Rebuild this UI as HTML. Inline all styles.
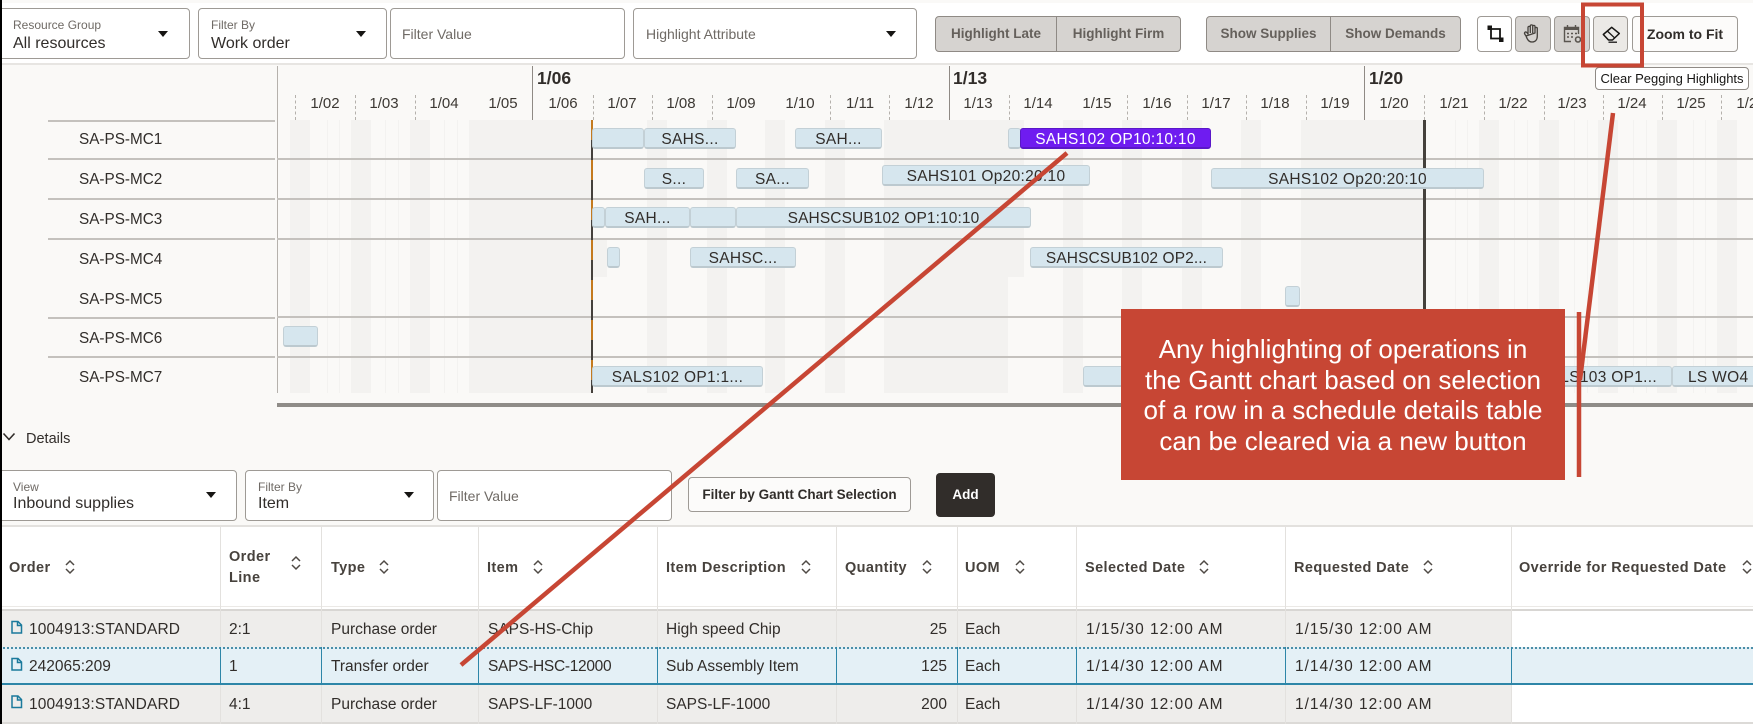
<!DOCTYPE html>
<html lang="en"><head><meta charset="utf-8"><title>Gantt chart</title>
<style>
html,body{margin:0;padding:0}
body{width:1753px;height:724px;position:relative;overflow:hidden;background:#faf9f7;font-family:"Liberation Sans",sans-serif;color:#312d2a}
div,span{position:absolute;box-sizing:border-box;white-space:nowrap}
.in{background:#fff;border:1px solid #9e9a95;border-radius:4px}
.sl{font-size:12px;color:#6f6a65;line-height:14px}
.v{font-size:16px;line-height:18px;color:#312d2a}
.ph{font-size:14px;color:#6f6a65;line-height:16px}
.ar{width:0;height:0;border-left:5px solid transparent;border-right:5px solid transparent;border-top:6px solid #161513}
.g{background:#d6d3d0;border:1px solid #8f8a85;font:bold 13.5px/34px "Liberation Sans",sans-serif;color:#65605b;text-align:center}
.ib{border:1px solid #9e9a95;border-radius:4px;height:36px;top:16px}
.s{top:120px;height:273px;background:#f3f2f0}
.t{top:120px;height:273px;width:1px;background:#f3f2f0}
.k{top:95px;height:25px;width:0;border-left:1px dashed #b5b1ac}
.d{top:95px;width:60px;text-align:center;font-size:15px;line-height:18px;color:#3c3833}
.w{top:68px;font:bold 17.5px/20px "Liberation Sans",sans-serif;color:#312d2a}
.hl{left:277px;width:1476px;height:2px;background:#c4c1bd}
.ll{left:48px;width:227px;height:2px;background:#c4c1bd}
.rl{left:79px;font-size:15.3px;line-height:18px;color:#312d2a}
.b{background:#d6e6ee;border:1px solid #c3d0d6;border-bottom:2px solid #bcc9cf;border-radius:3px;height:21px;font-size:15.5px;letter-spacing:.3px;line-height:22px;text-align:center;color:#312d2a;overflow:hidden}
.h{font:bold 14.5px/18px "Liberation Sans",sans-serif;letter-spacing:.4px;color:#47423d}
.c{font-size:15.5px;line-height:18px;color:#312d2a}
.dt{letter-spacing:1px}
.vl{width:1px;background:#e3e1de}
.sv{width:1px;top:647px;height:38px;background:#2e86a8}
svg{position:absolute;overflow:visible}
</style></head><body>

<!-- top toolbar -->
<div style="left:0;top:3px;width:1753px;height:60px;background:#fff"></div>
<div style="left:0;top:63px;width:1753px;height:2px;background:#e7e5e2"></div>

<div class="in" style="left:-2px;top:8px;width:192px;height:51px"></div>
<div class="sl" style="left:13px;top:18px">Resource Group</div>
<div class="v" style="left:13px;top:35px">All resources</div>
<div class="ar" style="left:158px;top:31px"></div>

<div class="in" style="left:198px;top:8px;width:189px;height:51px"></div>
<div class="sl" style="left:211px;top:18px">Filter By</div>
<div class="v" style="left:211px;top:35px">Work order</div>
<div class="ar" style="left:356px;top:31px"></div>

<div class="in" style="left:390px;top:8px;width:235px;height:51px"></div>
<div class="ph" style="left:402px;top:26px">Filter Value</div>

<div class="in" style="left:633px;top:8px;width:284px;height:51px"></div>
<div class="ph" style="left:646px;top:26px">Highlight Attribute</div>
<div class="ar" style="left:886px;top:31px"></div>

<div class="g" style="left:935px;top:16px;width:122px;height:36px;border-radius:4px 0 0 4px">Highlight Late</div>
<div class="g" style="left:1056px;top:16px;width:125px;height:36px;border-radius:0 4px 4px 0">Highlight Firm</div>
<div class="g" style="left:1206px;top:16px;width:125px;height:36px;border-radius:4px 0 0 4px">Show Supplies</div>
<div class="g" style="left:1330px;top:16px;width:131px;height:36px;border-radius:0 4px 4px 0">Show Demands</div>

<div class="ib" style="left:1477px;width:35px;background:#fff"></div>
<svg style="left:1477px;top:16px" width="35" height="36" viewBox="0 0 35 36"><path d="M14 13H23V22.500H14Z" fill="none" stroke="#161513" stroke-width="1.800"/><rect x="10.500" y="9.500" width="4.500" height="4.500" fill="#161513"/><rect x="22" y="21.500" width="4.500" height="4.500" fill="#161513"/></svg>

<div class="ib" style="left:1515px;width:36px;background:#d6d3d0"></div>
<svg style="left:1515px;top:16px" width="36" height="36" viewBox="0 0 36 36"><path d="M11 20c-1.500-2-2-3-1-3.800 1-.7 2 .3 3 1.800V11.500c0-1.500 2.300-1.500 2.300 0V17M15.300 17V10c0-1.500 2.400-1.500 2.400 0v7M17.700 17v-6.500c0-1.500 2.300-1.500 2.300 0V17M20 17v-4.500c0-1.400 2.300-1.400 2.300 0V20c0 4-2.300 6-5.300 6-3 0-4.500-2-6-6z" fill="none" stroke="#45413c" stroke-width="1.300" stroke-linejoin="round"/></svg>

<div class="ib" style="left:1554px;width:36px;background:#d6d3d0"></div>
<svg style="left:1554px;top:16px" width="36" height="36" viewBox="0 0 36 36"><path d="M17 25.500H10.500V11.500H24.500V18" fill="none" stroke="#5a554f" stroke-width="1.400"/><path d="M10.500 11.500h14v2.500h-14z" fill="#5a554f"/><path d="M13.500 9v3M21.500 9v3M13 17.500h2M17 17.500h2M21 17.500h2M13 21h2M17 21h2" stroke="#5a554f" stroke-width="1.400" fill="none"/><circle cx="24" cy="23.500" r="2.500" fill="none" stroke="#5a554f" stroke-width="1.600"/></svg>

<div class="ib" style="left:1593px;width:35px;background:#ebe9e6"></div>
<svg style="left:1593px;top:16px" width="35" height="36" viewBox="0 0 35 36"><path d="M18.700 11.300L26.300 17.500L19.500 24H15.500L10.300 18.500Z" fill="none" stroke="#161513" stroke-width="1.500" stroke-linejoin="round"/><path d="M14.300 15L21.500 21.800" stroke="#161513" stroke-width="1.300" fill="none"/><path d="M15.500 26.200H24" stroke="#161513" stroke-width="1.300" fill="none"/></svg>

<div class="ib" style="left:1632px;width:106px;background:#fcfbfa;font:bold 14px/34px 'Liberation Sans',sans-serif;text-align:center;color:#312d2a">Zoom to Fit</div>

<!-- gantt stripes -->
<div class="s" style="left:290px;width:20px"></div><div class="s" style="left:351px;width:20px"></div><div class="s" style="left:410px;width:20px"></div><div class="s" style="left:469px;width:123px"></div><div class="s" style="left:647px;width:20px"></div><div class="s" style="left:707px;width:20px"></div><div class="s" style="left:765px;width:20px"></div><div class="s" style="left:825px;width:20px"></div><div class="s" style="left:884px;width:124px"></div><div class="s" style="left:1063px;width:20px"></div><div class="s" style="left:1122px;width:20px"></div><div class="s" style="left:1182px;width:20px"></div><div class="s" style="left:1241px;width:20px"></div><div class="s" style="left:1301px;width:123px"></div><div class="s" style="left:1479px;width:20px"></div><div class="s" style="left:1539px;width:20px"></div><div class="s" style="left:1598px;width:20px"></div><div class="s" style="left:1657px;width:20px"></div><div class="s" style="left:1717px;width:20px"></div>
<div class="s" style="left:1008px;width:16px;height:157px"></div>
<div class="s" style="left:592px;top:238px;width:15px;height:39px"></div>
<div class="t" style="left:327px"></div><div class="t" style="left:339px"></div><div class="t" style="left:385px"></div><div class="t" style="left:398px"></div><div class="t" style="left:444px"></div><div class="t" style="left:457px"></div><div class="t" style="left:1455px"></div><div class="t" style="left:1467px"></div><div class="t" style="left:1514px"></div><div class="t" style="left:1527px"></div><div class="t" style="left:1574px"></div><div class="t" style="left:1587px"></div><div class="t" style="left:1633px"></div><div class="t" style="left:1646px"></div><div class="t" style="left:1693px"></div><div class="t" style="left:1705px"></div>

<!-- time axis -->
<div style="left:277px;top:66px;width:1px;height:327px;background:#b5b1ac"></div>
<div style="left:532px;top:66px;width:1px;height:54px;background:#8f8a85"></div>
<div style="left:949px;top:66px;width:1px;height:54px;background:#8f8a85"></div>
<div style="left:1364px;top:66px;width:1px;height:54px;background:#8f8a85"></div>
<div class="w" style="left:537px">1/06</div><div class="w" style="left:953px">1/13</div><div class="w" style="left:1369px">1/20</div>

<div class="k" style="left:295px"></div><div class="k" style="left:355px"></div><div class="k" style="left:415px"></div><div class="k" style="left:593px"></div><div class="k" style="left:652px"></div><div class="k" style="left:712px"></div><div class="k" style="left:830px"></div><div class="k" style="left:889px"></div><div class="k" style="left:1009px"></div><div class="k" style="left:1127px"></div><div class="k" style="left:1187px"></div><div class="k" style="left:1246px"></div><div class="k" style="left:1306px"></div><div class="k" style="left:1424px"></div><div class="k" style="left:1484px"></div><div class="k" style="left:1544px"></div><div class="k" style="left:1603px"></div><div class="k" style="left:1662px"></div><div class="k" style="left:1721px"></div>

<div class="d" style="left:295px">1/02</div><div class="d" style="left:354px">1/03</div><div class="d" style="left:414px">1/04</div><div class="d" style="left:473px">1/05</div><div class="d" style="left:533px">1/06</div><div class="d" style="left:592px">1/07</div><div class="d" style="left:651px">1/08</div><div class="d" style="left:711px">1/09</div><div class="d" style="left:770px">1/10</div><div class="d" style="left:830px">1/11</div><div class="d" style="left:889px">1/12</div><div class="d" style="left:948px">1/13</div><div class="d" style="left:1008px">1/14</div><div class="d" style="left:1067px">1/15</div><div class="d" style="left:1127px">1/16</div><div class="d" style="left:1186px">1/17</div><div class="d" style="left:1245px">1/18</div><div class="d" style="left:1305px">1/19</div><div class="d" style="left:1364px">1/20</div><div class="d" style="left:1424px">1/21</div><div class="d" style="left:1483px">1/22</div><div class="d" style="left:1542px">1/23</div><div class="d" style="left:1602px">1/24</div><div class="d" style="left:1661px">1/25</div><div class="d" style="left:1721px">1/26</div>

<!-- row lines and labels -->
<div class="ll" style="top:120px"></div><div class="ll" style="top:158px"></div><div class="ll" style="top:198px"></div><div class="ll" style="top:238px"></div><div class="ll" style="top:317px"></div><div class="ll" style="top:356px"></div>
<div class="hl" style="top:158px"></div><div class="hl" style="top:198px"></div><div class="hl" style="top:238px"></div><div class="hl" style="top:316px"></div><div class="hl" style="top:356px"></div>
<div class="rl" style="top:131px">SA-PS-MC1</div><div class="rl" style="top:171px">SA-PS-MC2</div><div class="rl" style="top:211px">SA-PS-MC3</div><div class="rl" style="top:251px">SA-PS-MC4</div><div class="rl" style="top:291px">SA-PS-MC5</div><div class="rl" style="top:330px">SA-PS-MC6</div><div class="rl" style="top:369px">SA-PS-MC7</div>

<!-- today / marker lines -->
<div style="left:591px;top:120px;width:2px;height:273px;background:repeating-linear-gradient(#c47a1e 0 20px,#45413c 20px 40px)"></div>
<div style="left:1423px;top:120px;width:3px;height:189px;background:#45413c"></div>

<!-- bars -->
<div class="b" style="left:592px;top:128px;width:52px"></div>
<div class="b" style="left:644px;top:128px;width:92px">SAHS...</div>
<div class="b" style="left:795px;top:128px;width:87px">SAH...</div>
<div class="b" style="left:1008px;top:128px;width:13px"></div>
<div class="b" style="left:1020px;top:128px;width:191px;background:#6f1cf0;border-color:#5a18c8;color:#fff">SAHS102 OP10:10:10</div>
<div class="b" style="left:644px;top:168px;width:60px">S...</div>
<div class="b" style="left:736px;top:168px;width:73px">SA...</div>
<div class="b" style="left:882px;top:165px;width:208px">SAHS101 Op20:20:10</div>
<div class="b" style="left:1211px;top:168px;width:273px">SAHS102 Op20:20:10</div>
<div class="b" style="left:592px;top:207px;width:13px"></div>
<div class="b" style="left:605px;top:207px;width:85px">SAH...</div>
<div class="b" style="left:690px;top:207px;width:46px"></div>
<div class="b" style="left:736px;top:207px;width:295px;letter-spacing:.1px">SAHSCSUB102 OP1:10:10</div>
<div class="b" style="left:607px;top:247px;width:13px"></div>
<div class="b" style="left:690px;top:247px;width:106px">SAHSC...</div>
<div class="b" style="left:1030px;top:247px;width:193px;letter-spacing:.1px">SAHSCSUB102 OP2...</div>
<div class="b" style="left:1285px;top:286px;width:15px"></div>
<div class="b" style="left:283px;top:326px;width:35px"></div>
<div class="b" style="left:592px;top:366px;width:171px">SALS102 OP1:1...</div>
<div class="b" style="left:1083px;top:366px;width:60px"></div>
<div class="b" style="left:1524px;top:366px;width:148px">SALS103 OP1...</div>
<div class="b" style="left:1672px;top:366px;width:90px;text-align:left;padding-left:15px">LS WO4 - </div>

<!-- horizontal scrollbar -->
<div style="left:277px;top:403px;width:1476px;height:4px;background:#8f8c88"></div>

<!-- details -->
<svg style="left:2px;top:432px" width="14" height="10" viewBox="0 0 14 10"><path d="M1.500 1.500L7 7.500L12.500 1.500" fill="none" stroke="#312d2a" stroke-width="1.600"/></svg>
<div style="left:26px;top:430px;font-size:14.5px;line-height:18px;color:#312d2a">Details</div>

<div class="in" style="left:-2px;top:470px;width:239px;height:51px"></div>
<div class="sl" style="left:13px;top:480px">View</div>
<div class="v" style="left:13px;top:495px">Inbound supplies</div>
<div class="ar" style="left:206px;top:492px"></div>

<div class="in" style="left:245px;top:470px;width:189px;height:51px"></div>
<div class="sl" style="left:258px;top:480px">Filter By</div>
<div class="v" style="left:258px;top:495px">Item</div>
<div class="ar" style="left:404px;top:492px"></div>

<div class="in" style="left:437px;top:470px;width:235px;height:51px"></div>
<div class="ph" style="left:449px;top:488px">Filter Value</div>

<div style="left:688px;top:477px;width:223px;height:35px;background:#fcfbfa;border:1px solid #9e9a95;border-radius:4px;font:bold 13.5px/34px 'Liberation Sans',sans-serif;text-align:center;color:#312d2a">Filter by Gantt Chart Selection</div>
<div style="left:936px;top:473px;width:59px;height:44px;background:#312d2a;border-radius:4px;font:bold 13.5px/44px 'Liberation Sans',sans-serif;text-align:center;color:#fff">Add</div>

<!-- table -->
<div style="left:0;top:525px;width:1753px;height:199px;background:#fff;border-top:2px solid #e3e1de"></div>
<div style="left:0;top:606px;width:1753px;height:1px;background:#ebe9e6"></div>
<div style="left:0;top:609px;width:1753px;height:2px;background:#d8d6d3"></div>
<div style="left:0;top:611px;width:1511px;height:36px;background:#eeedeb"></div>
<div style="left:0;top:647px;width:1753px;height:38px;background:#e4f0f6;border-top:2px dotted #4a8ea8;border-bottom:2px solid #2e86a8"></div>
<div style="left:0;top:685px;width:1511px;height:37px;background:#eeedeb"></div>
<div style="left:0;top:722px;width:1753px;height:2px;background:#dcdad7"></div>

<div class="vl" style="left:220px;top:527px;height:120px"></div><div class="vl" style="left:321px;top:527px;height:120px"></div><div class="vl" style="left:478px;top:527px;height:120px"></div><div class="vl" style="left:657px;top:527px;height:120px"></div><div class="vl" style="left:836px;top:527px;height:120px"></div><div class="vl" style="left:957px;top:527px;height:120px"></div><div class="vl" style="left:1076px;top:527px;height:120px"></div><div class="vl" style="left:1285px;top:527px;height:120px"></div><div class="vl" style="left:1511px;top:527px;height:120px"></div>
<div class="vl" style="left:220px;top:685px;height:39px"></div><div class="vl" style="left:321px;top:685px;height:39px"></div><div class="vl" style="left:478px;top:685px;height:39px"></div><div class="vl" style="left:657px;top:685px;height:39px"></div><div class="vl" style="left:836px;top:685px;height:39px"></div><div class="vl" style="left:957px;top:685px;height:39px"></div><div class="vl" style="left:1076px;top:685px;height:39px"></div><div class="vl" style="left:1285px;top:685px;height:39px"></div><div class="vl" style="left:1511px;top:685px;height:39px"></div>
<div class="sv" style="left:220px"></div><div class="sv" style="left:321px"></div><div class="sv" style="left:478px"></div><div class="sv" style="left:657px"></div><div class="sv" style="left:836px"></div><div class="sv" style="left:957px"></div><div class="sv" style="left:1076px"></div><div class="sv" style="left:1285px"></div><div class="sv" style="left:1511px"></div>

<div class="h" style="left:9px;top:559px">Order</div>
<div class="h" style="left:229px;top:548px">Order</div><div class="h" style="left:229px;top:569px">Line</div>
<div class="h" style="left:331px;top:559px">Type</div>
<div class="h" style="left:487px;top:559px">Item</div>
<div class="h" style="left:666px;top:559px">Item Description</div>
<div class="h" style="left:845px;top:559px">Quantity</div>
<div class="h" style="left:965px;top:559px">UOM</div>
<div class="h" style="left:1085px;top:559px">Selected Date</div>
<div class="h" style="left:1294px;top:559px">Requested Date</div>
<div class="h" style="left:1519px;top:559px">Override for Requested Date</div>

<svg style="left:0;top:0" width="1753" height="724" viewBox="0 0 1753 724" fill="none" stroke="#4f4a45" stroke-width="1.500">
<path d="M66 565L70 561L74 565M66 569L70 573L74 569"/>
<path d="M292 561L296 557L300 561M292 565L296 569L300 565"/>
<path d="M380 565L384 561L388 565M380 569L384 573L388 569"/>
<path d="M534 565L538 561L542 565M534 569L538 573L542 569"/>
<path d="M802 565L806 561L810 565M802 569L806 573L810 569"/>
<path d="M923 565L927 561L931 565M923 569L927 573L931 569"/>
<path d="M1016 565L1020 561L1024 565M1016 569L1020 573L1024 569"/>
<path d="M1200 565L1204 561L1208 565M1200 569L1204 573L1208 569"/>
<path d="M1424 565L1428 561L1432 565M1424 569L1428 573L1432 569"/>
<path d="M1743 565L1747 561L1751 565M1743 569L1747 573L1751 569"/>
<g stroke="#1b7a9c" stroke-width="1.500"><path d="M12 621.500H18L21.500 625V633H12ZM17.500 621.500V625.500H21.500"/><path d="M12 658.500H18L21.500 662V670H12ZM17.500 658.500V662.500H21.500"/><path d="M12 696H18L21.500 699.500V707.500H12ZM17.500 696V700H21.500"/></g>
</svg>

<div class="c" style="left:29px;top:621px;letter-spacing:.15px">1004913:STANDARD</div><div class="c" style="left:229px;top:621px">2:1</div><div class="c" style="left:331px;top:621px">Purchase order</div><div class="c" style="left:488px;top:621px">SAPS-HS-Chip</div><div class="c" style="left:666px;top:621px">High speed Chip</div><div class="c" style="left:857px;top:621px;width:90px;text-align:right">25</div><div class="c" style="left:965px;top:621px">Each</div><div class="c dt" style="left:1086px;top:621px">1/15/30 12:00 AM</div><div class="c dt" style="left:1295px;top:621px">1/15/30 12:00 AM</div>

<div class="c" style="left:29px;top:658px">242065:209</div><div class="c" style="left:229px;top:658px">1</div><div class="c" style="left:331px;top:658px">Transfer order</div><div class="c" style="left:488px;top:658px;letter-spacing:-.3px">SAPS-HSC-12000</div><div class="c" style="left:666px;top:658px">Sub Assembly Item</div><div class="c" style="left:857px;top:658px;width:90px;text-align:right">125</div><div class="c" style="left:965px;top:658px">Each</div><div class="c dt" style="left:1086px;top:658px">1/14/30 12:00 AM</div><div class="c dt" style="left:1295px;top:658px">1/14/30 12:00 AM</div>

<div class="c" style="left:29px;top:696px;letter-spacing:.15px">1004913:STANDARD</div><div class="c" style="left:229px;top:696px">4:1</div><div class="c" style="left:331px;top:696px">Purchase order</div><div class="c" style="left:488px;top:696px">SAPS-LF-1000</div><div class="c" style="left:666px;top:696px">SAPS-LF-1000</div><div class="c" style="left:857px;top:696px;width:90px;text-align:right">200</div><div class="c" style="left:965px;top:696px">Each</div><div class="c dt" style="left:1086px;top:696px">1/14/30 12:00 AM</div><div class="c dt" style="left:1295px;top:696px">1/14/30 12:00 AM</div>

<!-- left edge -->
<div style="left:0;top:0;width:2px;height:724px;background:#000"></div>

<!-- tooltip -->
<div style="left:1595px;top:67px;width:154px;height:23px;background:#fff;border:1px solid #8f8a85;border-radius:4px;font-size:13px;line-height:21px;text-align:center;color:#161513">Clear Pegging Highlights</div>

<!-- callout -->
<div style="left:1121px;top:309px;width:444px;height:171px;background:#c74634"></div>
<div style="left:1121px;top:334px;width:444px;color:#fff;font-size:26px;line-height:30.5px;text-align:center">Any highlighting of operations in<br>the Gantt chart based on selection<br>of a row in a schedule details table<br>can be cleared via a new button</div>

<svg style="left:0;top:0" width="1753" height="724" viewBox="0 0 1753 724" fill="none" stroke="#c74634">
<path d="M1067 153L461 665" stroke-width="4.500"/>
<path d="M1613 113L1580 380" stroke-width="4.500"/>
<path d="M1579 312V477" stroke-width="4.500"/>
<rect x="1583" y="4.500" width="59" height="61" stroke-width="4"/>
</svg>

</body></html>
